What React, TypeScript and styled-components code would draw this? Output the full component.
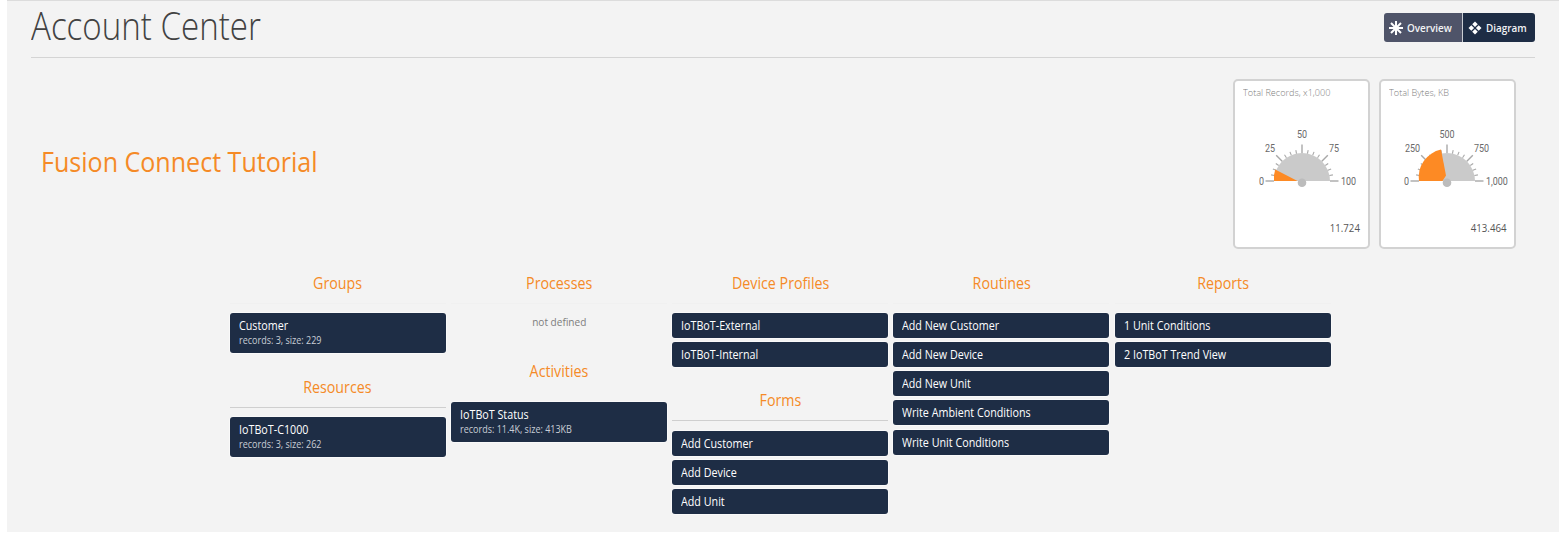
import React from "react";
import styled, { createGlobalStyle } from "styled-components";

const Global = createGlobalStyle`
  html, body { margin: 0; padding: 0; background: #fff; }
  body { font-family: "Open Sans", "Liberation Sans", sans-serif; }
  * { box-sizing: border-box; }
`;

const Squeeze = styled.span<{ $x: number; $origin?: string }>`
  display: inline-block;
  white-space: nowrap;
  transform: scaleX(${(p) => p.$x});
  transform-origin: ${(p) => p.$origin ?? "left"} center;
`;

const Panel = styled.div`
  margin: 0 9px 0 7px;
  height: 532px;
  background: #f3f3f3;
  border-top: 1px solid #dcdcdc;
  padding: 0 24px;
  overflow: hidden;
`;

const Header = styled.header`
  height: 57px;
  border-bottom: 1px solid #d4d4d4;
  display: flex;
  justify-content: space-between;
  align-items: flex-start;
`;

const Title = styled.h1`
  margin: 0;
  font-size: 38px;
  line-height: 49px;
  font-weight: 300;
  color: #424242;
`;

const Toggle = styled.div`
  display: flex;
  margin-top: 12px;
  height: 29px;
  border-radius: 3px;
  overflow: hidden;
`;

const ToggleButton = styled.div<{ $active?: boolean; $w: number }>`
  width: ${(p) => p.$w}px;
  display: flex;
  align-items: center;
  gap: 4px;
  padding-left: 5px;
  font-size: 11px;
  font-weight: 600;
  color: #f2f3f5;
  background: ${(p) => (p.$active ? "#4f5469" : "#1e2d45")};
  & + & { border-left: 1px solid #c9ccd2; }
`;

const Top = styled.section`
  height: 206px;
  display: flex;
  justify-content: space-between;
  align-items: flex-start;
  padding: 21px 19px 0 10px;
`;

const Banner = styled.h2`
  margin: 64px 0 0;
  font-size: 27.5px;
  line-height: 38px;
  font-weight: 400;
  color: #f58a26;
`;

const Cards = styled.div`
  display: flex;
  gap: 9.5px;
`;

const Card = styled.div`
  width: 137px;
  height: 170px;
  background: #fff;
  border: 2px solid #d2d2d2;
  border-radius: 5px;
  display: flex;
  flex-direction: column;
`;

const CardTitle = styled.div`
  font-size: 9.5px;
  line-height: 14px;
  margin: 5px 0 0 8px;
  color: #808080;
  font-weight: 300;
`;

const CardValue = styled.div`
  margin: auto 8px 12px 0;
  text-align: right;
  font-size: 11.5px;
  line-height: 14px;
  color: #555;
`;

const Board = styled.section`
  display: grid;
  grid-template-columns: repeat(5, 216px);
  column-gap: 5.25px;
  padding-left: 198.7px;
`;

const Column = styled.div`
  display: flex;
  flex-direction: column;
`;

const Heading = styled.h3<{ $gap?: number; $line?: string }>`
  margin: ${(p) => p.$gap ?? 0}px 0 0;
  height: 40px;
  line-height: 38px;
  text-align: center;
  font-size: 16px;
  font-weight: 400;
  color: #f58a26;
  border-bottom: 1px solid ${(p) => p.$line ?? "#cfcfcf"};
`;

const List = styled.div<{ $top?: number }>`
  display: flex;
  flex-direction: column;
  gap: 4.15px;
  padding-top: ${(p) => p.$top ?? 9}px;
`;

const Item = styled.div`
  background: #1e2d45;
  border-radius: 3px;
  box-shadow: 0 0 0 0.5px #fff;
  color: #fff;
  padding: 0 9px;
  height: 25px;
  font-size: 12px;
  line-height: 25px;
`;

const TallItem = styled(Item)`
  height: 40px;
  padding-top: 5px;
  line-height: 15px;
`;

const Meta = styled.div`
  font-size: 10px;
  line-height: 14px;
  color: #c9ced6;
`;

const Empty = styled.div`
  text-align: center;
  font-size: 10.5px;
  line-height: 18px;
  color: #7d7d7d;
  padding-top: 9px;
  height: 48px;
`;

const Star = () => (
  <svg width="14" height="14" viewBox="0 0 14 14" stroke="#fff" strokeWidth="2">
    <path d="M7 0v14M0 7h14M2 2l10 10M12 2L2 12" />
  </svg>
);

const Diamonds = () => (
  <svg width="14" height="14" viewBox="0 0 14 14" fill="#fff">
    <path d="M7 .5l2.8 2.8L7 6.100 4.200 3.300zM3.300 4.200L6.100 7 3.300 9.800.5 7zM10.700 4.200L13.500 7l-2.800 2.800L7.900 7zM7 7.900l2.800 2.800L7 13.500l-2.800-2.800z" />
  </svg>
);

type GaugeProps = { cx: number; labels: string[]; wedge: string };

const Gauge = ({ cx, labels, wedge }: GaugeProps) => {
  const cy = 81;
  const r = 28;
  const ticks = Array.from({ length: 17 }, (_, i) => {
    const a = Math.PI - (i * Math.PI) / 16;
    const major = i % 4 === 0;
    const out = r + (major ? 8.5 : 3.5);
    return (
      <line
        key={i}
        x1={cx + r * Math.cos(a)}
        y1={cy - r * Math.sin(a)}
        x2={cx + out * Math.cos(a)}
        y2={cy - out * Math.sin(a)}
        stroke="#a8a8a8"
        strokeWidth={major ? 1.4 : 1.1}
      />
    );
  });
  const Label = ({ x, y, anchor, text }: { x: number; y: number; anchor?: "end" | "middle"; text: string }) => (
    <text
      transform={`translate(${x} ${y}) scale(0.78 1)`}
      textAnchor={anchor}
      fontSize={11.5}
      fill="#6a6a6a"
      fontFamily="Roboto, 'Liberation Sans', sans-serif"
    >
      {text}
    </text>
  );
  return (
    <svg width="132" height="100" viewBox="0 0 132 100">
      <path d={`M${cx - r} ${cy}A${r} ${r} 0 0 1 ${cx + r} ${cy}Z`} fill="#cacaca" />
      {ticks}
      <path d={wedge} fill="#fd8a24" />
      <circle cx={cx} cy={cy + 1.7} r={4.3} fill="#bcbcbc" />
      <Label x={cx - 38} y={cy + 4} anchor="end" text={labels[0]} />
      <Label x={cx - 27} y={cy - 29} anchor="end" text={labels[1]} />
      <Label x={cx} y={cy - 43} anchor="middle" text={labels[2]} />
      <Label x={cx + 27} y={cy - 29} text={labels[3]} />
      <Label x={cx + 39} y={cy + 4} text={labels[4]} />
    </svg>
  );
};

const ItemLabel = ({ children }: { children: React.ReactNode }) => <Squeeze $x={0.895}>{children}</Squeeze>;

const Plain = ({ names, top }: { names: string[]; top?: number }) => (
  <List $top={top}>
    {names.map((n) => (
      <Item key={n}>
        <ItemLabel>{n}</ItemLabel>
      </Item>
    ))}
  </List>
);

const Tall = ({ name, meta, top }: { name: string; meta: string; top?: number }) => (
  <List $top={top}>
    <TallItem>
      <ItemLabel>{name}</ItemLabel>
      <Meta>
        <Squeeze $x={0.9}>{meta}</Squeeze>
      </Meta>
    </TallItem>
  </List>
);

const Head = ({ text, gap, line }: { text: string; gap?: number; line?: string }) => (
  <Heading $gap={gap} $line={line}>
    <Squeeze $x={0.89} $origin="center">{text}</Squeeze>
  </Heading>
);

export default function App() {
  return (
    <>
      <Global />
      <Panel>
        <Header>
          <Title>
            <Squeeze $x={0.871}>Account Center</Squeeze>
          </Title>
          <Toggle>
            <ToggleButton $active $w={78}>
              <Star />
              <Squeeze $x={0.9}>Overview</Squeeze>
            </ToggleButton>
            <ToggleButton $w={73}>
              <Diamonds />
              <Squeeze $x={0.9}>Diagram</Squeeze>
            </ToggleButton>
          </Toggle>
        </Header>
        <Top>
          <Banner>
            <Squeeze $x={0.911}>Fusion Connect Tutorial</Squeeze>
          </Banner>
          <Cards>
            <Card>
              <CardTitle>
                <Squeeze $x={0.96}>Total Records, x1,000</Squeeze>
              </CardTitle>
              <Gauge
                cx={67}
                labels={["0", "25", "50", "75", "100"]}
                wedge="M40.200 69.500A28 28 0 0 0 39 81H62.500Z"
              />
              <CardValue>
                <Squeeze $x={0.84} $origin="right">11.724</Squeeze>
              </CardValue>
            </Card>
            <Card>
              <CardTitle>
                <Squeeze $x={0.96}>Total Bytes, KB</Squeeze>
              </CardTitle>
              <Gauge
                cx={66}
                labels={["0", "250", "500", "750", "1,000"]}
                wedge="M38 81A28 28 0 0 1 60 49.600L65 75.500L61.500 81Z"
              />
              <CardValue>
                <Squeeze $x={0.84} $origin="right">413.464</Squeeze>
              </CardValue>
            </Card>
          </Cards>
        </Top>
        <Board>
          <Column>
            <Head text="Groups" line="#f0f0f0" />
            <Tall name="Customer" meta="records: 3, size: 229" />
            <Head text="Resources" gap={15} />
            <Tall name="IoTBoT-C1000" meta="records: 3, size: 262" />
          </Column>
          <Column>
            <Head text="Processes" line="#f0f0f0" />
            <Empty>
              <Squeeze $x={0.96} $origin="center">not defined</Squeeze>
            </Empty>
            <Head text="Activities" line="#f3f3f3" />
            <Tall name="IoTBoT Status" meta="records: 11.4K, size: 413KB" top={10} />
          </Column>
          <Column>
            <Head text="Device Profiles" line="#f0f0f0" />
            <Plain names={["IoTBoT-External", "IoTBoT-Internal"]} />
            <Head text="Forms" gap={14} />
            <Plain names={["Add Customer", "Add Device", "Add Unit"]} top={9.5} />
          </Column>
          <Column>
            <Head text="Routines" line="#f0f0f0" />
            <Plain
              names={[
                "Add New Customer",
                "Add New Device",
                "Add New Unit",
                "Write Ambient Conditions",
                "Write Unit Conditions",
              ]}
            />
          </Column>
          <Column>
            <Head text="Reports" line="#f0f0f0" />
            <Plain names={["1 Unit Conditions", "2 IoTBoT Trend View"]} />
          </Column>
        </Board>
      </Panel>
    </>
  );
}
